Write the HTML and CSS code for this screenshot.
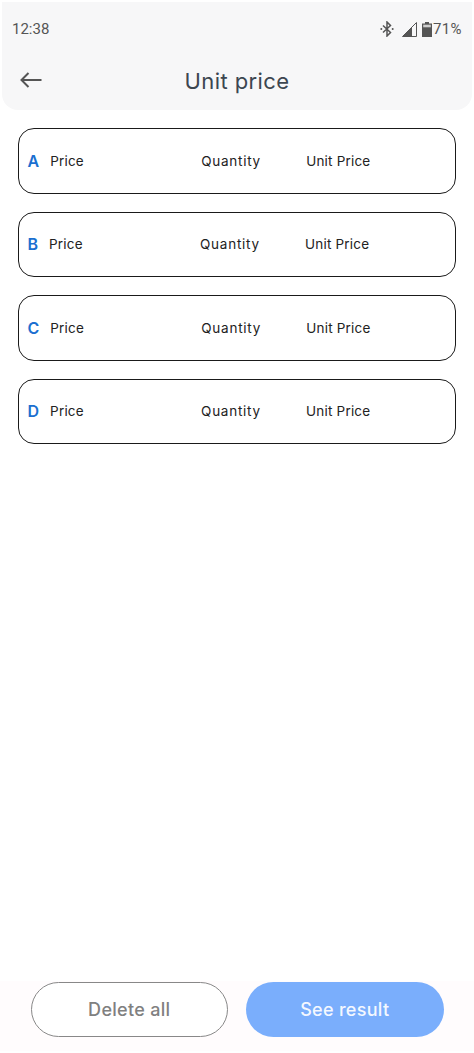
FILE: index.html
```html
<!DOCTYPE html>
<html lang="en">
<head>
<meta charset="utf-8">
<title>Unit price</title>
<link rel="stylesheet" href="styles.css">
</head>
<body>
<div class="app">
  <header class="top">
    <div class="status">
      <span class="time">12:38</span>
      <span class="status-icons">
        <svg class="ic-bt" viewBox="0 0 14 16" width="14" height="16"><path d="M3 4.500l7.500 7L7 15V1l3.500 3.500L3 11.500" fill="none" stroke="#555" stroke-width="1.500"/><circle cx="1.300" cy="8" r="1" fill="#555"/><circle cx="12.700" cy="8" r="1" fill="#555"/></svg>
        <svg class="ic-signal" viewBox="0 0 15 15" width="15" height="15"><path d="M14.500 0.500V14.500H0.500Z" fill="none" stroke="#555" stroke-width="1"/><path d="M10 5V14.500H0.500L10 5Z" fill="#555"/></svg>
        <svg class="ic-batt" viewBox="0 0 10 15" width="10" height="15"><path d="M3 0h4v1.500h3V15H0V1.500h3z" fill="#555"/><rect x="1.200" y="2.700" width="7.600" height="2.600" fill="#cfcfcf"/></svg>
        <span class="pct">71%</span>
      </span>
    </div>
    <div class="title-bar">
      <svg class="back" viewBox="0 0 22 16" width="22" height="16"><path d="M21.500 8H1.500M8.500 1L1.500 8l7 7" fill="none" stroke="#555" stroke-width="2"/></svg>
      <h1 class="title">Unit price</h1>
    </div>
  </header>
  <main class="rows">
    <div class="row"><span class="letter">A</span><span class="f price">Price</span><span class="f qty">Quantity</span><span class="f unit">Unit Price</span></div>
    <div class="row"><span class="letter">B</span><span class="f price">Price</span><span class="f qty">Quantity</span><span class="f unit">Unit Price</span></div>
    <div class="row"><span class="letter">C</span><span class="f price">Price</span><span class="f qty">Quantity</span><span class="f unit">Unit Price</span></div>
    <div class="row"><span class="letter">D</span><span class="f price">Price</span><span class="f qty">Quantity</span><span class="f unit">Unit Price</span></div>
  </main>
  <footer class="actions">
    <button class="btn ghost">Delete all</button>
    <button class="btn solid">See result</button>
  </footer>
</div>
</body>
</html>
```
FILE: styles.css
```css
* { box-sizing: border-box; }
html, body { margin: 0; height: 100%; background: #fff; }
body { font-family: "Inter", "Liberation Sans", sans-serif; }
.app { height: 1053px; display: flex; flex-direction: column; padding-top: 2px; overflow: hidden; }
.top { height: 108px; margin: 0 2px; background: #f7f7f8; border-radius: 0 0 16px 16px; flex: none; }
.status { height: 54px; padding: 0 10px; display: flex; align-items: center; justify-content: space-between; font-family: "Roboto", sans-serif; color: #555; }
.time { font-size: 15px; }
.status-icons { display: flex; align-items: center; }
.ic-bt { margin-right: 8px; }
.ic-signal { margin-right: 5px; }
.ic-batt { margin-right: 1px; }
.pct { font-size: 15px; letter-spacing: 0.4px; }
.title-bar { height: 54px; position: relative; display: flex; align-items: center; justify-content: center; padding-bottom: 4px; }
.back { position: absolute; left: 18px; top: 16px; }
.title { margin: 0; font-size: 22px; font-weight: 400; color: #3c4650; letter-spacing: 0.4px; }
.rows { flex: 1; padding: 18px 0 0 17.500px; display: flex; flex-direction: column; gap: 18px; }
.row { height: 65.500px; width: 438.500px; border: 1.500px solid #1a1a1a; border-radius: 16px; display: flex; align-items: center; padding-left: 9px; }
.letter { font-size: 16px; font-weight: 600; color: #1b6fd0; margin-right: 11px; }
.f { font-size: 13.500px; color: #222; letter-spacing: 0.2px; white-space: nowrap; }
.price { width: 151px; }
.qty { width: 105px; letter-spacing: 0.75px; }
.actions { flex: none; height: 70px; margin-bottom: 2px; background: #fffcfd; display: flex; justify-content: center; gap: 18px; padding-top: 1px; }
.btn { width: 197.500px; height: 55px; border-radius: 28px; font: 500 18px "Inter", "Liberation Sans", sans-serif; letter-spacing: 0.3px; }
.ghost { background: #fff; border: 1px solid #888; color: #808080; }
.solid { background: #7aaefc; border: 0; color: #f4f8ff; }
```
